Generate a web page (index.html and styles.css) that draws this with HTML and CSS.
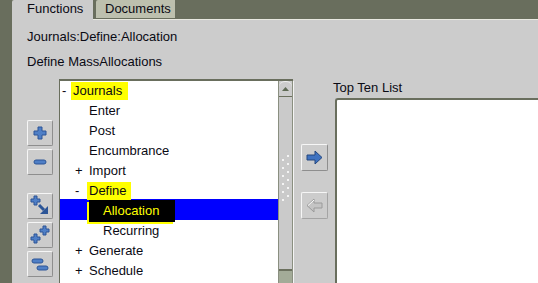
FILE: index.html
```html
<!DOCTYPE html>
<html lang="en">
<head>
  <meta charset="UTF-8">
  <title>Define MassAllocations</title>
  <link rel="stylesheet" href="styles.css">
</head>
<body>
  <div class="frame">
    <div class="rail"></div>
    <div class="main">
      <div class="tabs">
        <div class="tab active">Functions</div>
        <div class="tab">Documents</div>
      </div>
      <div class="crumb">Journals:Define:Allocation</div>
      <div class="title">Define MassAllocations</div>

      <div class="work">
        <div class="tools">
          <div class="btn" title="Expand">
            <svg width="26" height="26" viewBox="0 0 26 26"><path d="M11 7h4v4h4v4h-4v4h-4v-4H7v-4h4z" fill="#4f7fc6" stroke="#2c5597"/></svg>
          </div>
          <div class="btn" title="Collapse">
            <svg width="26" height="26" viewBox="0 0 26 26"><rect x="7" y="11" width="12" height="4" rx="2" fill="#4f7fc6" stroke="#2c5597"/></svg>
          </div>
          <div class="btn gap" title="Expand Branch">
            <svg width="26" height="26" viewBox="0 0 26 26"><path d="M7 3h3v3h3v3h-3v3H7V9H4V6h3z" fill="#4f7fc6" stroke="#2c5597"/><path d="M12 12l5 5" stroke="#2c5597" stroke-width="3"/><path d="M21 13v8h-8z" fill="#2c5597"/></svg>
          </div>
          <div class="btn" title="Expand All">
            <svg width="26" height="26" viewBox="0 0 26 26"><path d="M7 12h3v3h3v3h-3v3H7v-3H4v-3h3z" fill="#4f7fc6" stroke="#2c5597"/><path d="M16 4h3v3h3v3h-3v3h-3v-3h-3V7h3z" fill="#4f7fc6" stroke="#2c5597"/></svg>
          </div>
          <div class="btn" title="Collapse All">
            <svg width="26" height="26" viewBox="0 0 26 26"><rect x="5" y="8" width="11" height="4" rx="2" fill="#4f7fc6" stroke="#2c5597"/><rect x="10" y="15" width="11" height="4" rx="2" fill="#4f7fc6" stroke="#2c5597"/></svg>
          </div>
        </div>

        <div class="navigator">
          <div class="tree">
            <div class="row lvl0"><span class="tog">-</span><span class="mark">Journals</span></div>
            <div class="row lvl1"><span class="tog"></span>Enter</div>
            <div class="row lvl1"><span class="tog"></span>Post</div>
            <div class="row lvl1"><span class="tog"></span>Encumbrance</div>
            <div class="row lvl1"><span class="tog">+</span>Import</div>
            <div class="row lvl1"><span class="tog">-</span><span class="mark short">Define</span></div>
            <div class="row lvl2 selected"><span class="inked">Allocation</span></div>
            <div class="row lvl2"><span class="tog"></span>Recurring</div>
            <div class="row lvl1"><span class="tog">+</span>Generate</div>
            <div class="row lvl1"><span class="tog">+</span>Schedule</div>
          </div>
          <div class="scrollbar">
            <div class="scroll-up">
              <svg width="13" height="14" viewBox="0 0 13 14"><path d="M3 9l3.5-4 3.5 4z" fill="#5f6a55"/></svg>
            </div>
            <div class="track">
              <svg class="grip" width="9" height="48" viewBox="0 0 9 48">
                <g fill="#f4f4f4">
                  <rect x="6" y="0" width="2" height="2"/><rect x="1" y="4" width="2" height="2"/>
                  <rect x="6" y="8" width="2" height="2"/><rect x="1" y="12" width="2" height="2"/>
                  <rect x="6" y="16" width="2" height="2"/><rect x="1" y="20" width="2" height="2"/>
                  <rect x="6" y="24" width="2" height="2"/><rect x="1" y="28" width="2" height="2"/>
                  <rect x="6" y="32" width="2" height="2"/><rect x="1" y="36" width="2" height="2"/>
                  <rect x="6" y="40" width="2" height="2"/><rect x="1" y="44" width="2" height="2"/>
                </g>
              </svg>
            </div>
            <div class="scroll-foot"></div>
          </div>
        </div>

        <div class="movers">
          <div class="btn wide" title="Add">
            <svg width="27" height="27" viewBox="0 0 27 27"><path d="M6 11h8V7l7 6.5-7 6.5v-4H6z" fill="#3f72c0" stroke="#24477f"/></svg>
          </div>
          <div class="btn wide off" title="Remove">
            <svg width="27" height="27" viewBox="0 0 27 27"><path d="M21 11h-8V7l-7 6.5 7 6.5v-4h8z" fill="#c4c4c4" stroke="#9a9a9a"/><path d="M13 8l-6 5.5" stroke="#ffffff"/></svg>
          </div>
        </div>

        <div class="topten">
          <div class="label">Top Ten List</div>
          <div class="listbox"></div>
        </div>
      </div>
    </div>
  </div>
</body>
</html>
```

FILE: styles.css
```css
body {
  margin: 0;
  font-family: "Liberation Sans", Arial, sans-serif;
  font-size: 13px;
  color: #0a0a14;
  background-color: #cccccc;
  overflow: hidden;
}
.frame {
  display: flex;
  width: 538px;
  height: 283px;
  overflow: hidden;
}
.rail {
  width: 12px;
  flex: none;
  background-color: #696e5d;
}
.main {
  flex: 1;
  min-width: 0;
}
.tabs {
  display: flex;
  height: 20px;
  background-color: #696e5d;
  border-bottom: 1px solid #e8e8e0;
  box-sizing: border-box;
}
.tab {
  height: 18px;
  line-height: 18px;
  padding-left: 9px;
  width: 70px;
  margin-left: 3px;
  background-color: #bdc0ae;
  border-top-left-radius: 2px;
}
.tab.active {
  width: 66px;
  height: 20px;
  margin-left: 0;
  padding-left: 15px;
  background-color: #cccccc;
}
.crumb {
  padding: 7px 0 0 15px;
  height: 19px;
  line-height: 19px;
}
.title {
  padding: 6px 0 0 15px;
  height: 19px;
  line-height: 19px;
}
.work {
  display: flex;
  margin-top: 8px;
}
.tools {
  width: 47px;
  flex: none;
  padding-top: 41px;
  display: flex;
  flex-direction: column;
  align-items: flex-end;
}
.btn {
  width: 26px;
  height: 26px;
  margin-bottom: 3px;
  margin-right: 6px;
  border: 1px solid;
  border-color: #f6f6f6 #8e8e8e #8e8e8e #f6f6f6;
  border-radius: 2px;
  box-sizing: border-box;
  display: flex;
  align-items: center;
  justify-content: center;
}
.btn svg {
  flex: none;
}
.btn.gap {
  margin-top: 15px;
}
.navigator {
  display: flex;
  width: 234px;
  height: 204px;
  flex: none;
  border-top: 2px solid #696e5d;
  box-sizing: border-box;
}
.tree {
  flex: 1;
  background-color: #ffffff;
  border-left: 1px solid #696e5d;
}
.row {
  height: 20px;
  line-height: 20px;
  white-space: nowrap;
  display: flex;
  align-items: center;
}
.tog {
  display: inline-block;
  width: 14px;
  flex: none;
}
.lvl0 {
  padding-left: 2px;
}
.lvl0 .tog {
  width: 9px;
}
.lvl1 {
  padding-left: 15px;
}
.lvl2 {
  padding-left: 29px;
}
.mark {
  background-color: #ffff00;
  height: 18px;
  line-height: 18px;
  padding: 0 6px 0 2px;
}
.mark.short {
  margin-left: -2px;
  padding-right: 4px;
}
.selected {
  background-color: #0000ff;
  margin-top: -2px;
  height: 21px;
  margin-bottom: 1px;
}
.inked {
  background-color: #000000;
  color: #ffff00;
  width: 72px;
  padding-left: 14px;
  height: 22px;
  line-height: 22px;
  margin-top: 2px;
  box-shadow: -2px 2px 0 #ffff00;
}
.scrollbar {
  width: 15px;
  flex: none;
  display: flex;
  flex-direction: column;
  border-left: 1px solid #8a8f80;
  border-right: 1px solid #8a8f80;
  box-shadow: 1px 0 0 #f4f4f4;
  box-sizing: border-box;
}
.scroll-up {
  height: 14px;
  border-bottom: 1px solid #6b705e;
  border-top-left-radius: 6px;
  border-top-right-radius: 6px;
  border-top: 1px solid #f0f0f0;
}
.scroll-up svg {
  display: block;
}
.track {
  flex: 1;
  background-color: #cacaca;
}
.grip {
  display: block;
  margin: 58px 0 0 2px;
}
.scroll-foot {
  height: 12px;
  background-color: #a3ab98;
  border-top: 2px solid #6b705e;
}
.movers {
  width: 42px;
  flex: none;
  padding-top: 65px;
  display: flex;
  flex-direction: column;
}
.btn.wide {
  width: 27px;
  height: 27px;
  margin: 0 0 21px 8px;
}
.btn.off {
  border-color: #f6f6f6 #a4a4a4 #a4a4a4 #f6f6f6;
}
.topten {
  flex: 1;
}
.label {
  height: 19px;
  line-height: 18px;
  margin-left: -2px;
}
.listbox {
  height: 200px;
  background-color: #ffffff;
  border-top: 2px solid #696e5d;
  border-left: 2px solid #696e5d;
  border-top-left-radius: 3px;
}
```
